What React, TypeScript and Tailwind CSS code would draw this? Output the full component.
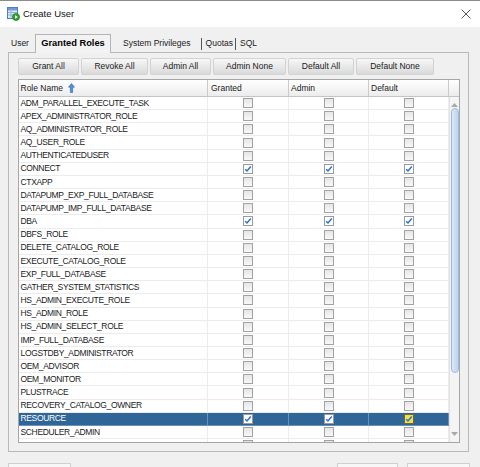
import React from "react";

type Role = { name: string; on?: boolean };

const roles: Role[] = [
  { name: "ADM_PARALLEL_EXECUTE_TASK" },
  { name: "APEX_ADMINISTRATOR_ROLE" },
  { name: "AQ_ADMINISTRATOR_ROLE" },
  { name: "AQ_USER_ROLE" },
  { name: "AUTHENTICATEDUSER" },
  { name: "CONNECT", on: true },
  { name: "CTXAPP" },
  { name: "DATAPUMP_EXP_FULL_DATABASE" },
  { name: "DATAPUMP_IMP_FULL_DATABASE" },
  { name: "DBA", on: true },
  { name: "DBFS_ROLE" },
  { name: "DELETE_CATALOG_ROLE" },
  { name: "EXECUTE_CATALOG_ROLE" },
  { name: "EXP_FULL_DATABASE" },
  { name: "GATHER_SYSTEM_STATISTICS" },
  { name: "HS_ADMIN_EXECUTE_ROLE" },
  { name: "HS_ADMIN_ROLE" },
  { name: "HS_ADMIN_SELECT_ROLE" },
  { name: "IMP_FULL_DATABASE" },
  { name: "LOGSTDBY_ADMINISTRATOR" },
  { name: "OEM_ADVISOR" },
  { name: "OEM_MONITOR" },
  { name: "PLUSTRACE" },
  { name: "RECOVERY_CATALOG_OWNER" },
  { name: "RESOURCE", on: true },
  { name: "SCHEDULER_ADMIN" },
  { name: "SELECT_CATALOG_ROLE" },
];

const SELECTED = "RESOURCE";

function Check({ checked, focus }: { checked?: boolean; focus?: boolean }) {
  const box = focus
    ? "border-[#6a6a3a] bg-[#f6e04a]"
    : checked
      ? "border-[#9a9a9a] bg-white"
      : "border-[#a2a2a2] bg-gradient-to-b from-[#e6e6e6] to-[#f8f8f8]";
  return (
    <div className={`w-[10px] h-[10px] border ${box} flex items-center justify-center`}>
      {checked && (
        <svg width="8" height="8" viewBox="0 0 8 8">
          <path d="M1.2 4.2 L3 6 L6.8 1.6" fill="none" stroke="#2f6ed3" strokeWidth="1.5" />
        </svg>
      )}
    </div>
  );
}

function ToolButton({ label, w }: { label: string; w: string }) {
  return (
    <div
      className={`${w} h-[17px] flex items-center justify-center rounded-[2px] border border-[#d2d2d2] bg-gradient-to-b from-[#f7f7f7] to-[#dadada] text-[8.5px] text-[#1a1a1a]`}
    >
      {label}
    </div>
  );
}

function TitleIcon() {
  return (
    <svg width="13" height="14" viewBox="0 0 13 14">
      <rect x="0.5" y="0.5" width="10" height="11" fill="#dfe9f6" stroke="#4f7fc0" />
      <rect x="1" y="1" width="9" height="2.5" fill="#6f9bd6" />
      <line x1="1" y1="5.5" x2="10" y2="5.5" stroke="#8fb0dc" />
      <line x1="1" y1="8" x2="10" y2="8" stroke="#8fb0dc" />
      <line x1="4" y1="3" x2="4" y2="11" stroke="#8fb0dc" />
      <circle cx="9" cy="10" r="3.6" fill="#2ea12e" stroke="#1d7a1d" strokeWidth="0.6" />
      <path d="M8 8.2 L10.8 10 L8 11.8 Z" fill="#ffffff" />
    </svg>
  );
}

function SortArrow() {
  return (
    <svg width="7" height="10" viewBox="0 0 7 10">
      <path d="M3.5 0.5 L6.5 4.2 L4.6 4.2 L4.6 9.5 L2.4 9.5 L2.4 4.2 L0.5 4.2 Z" fill="#4d90dd" stroke="#2a67b5" strokeWidth="0.6" />
    </svg>
  );
}

export default function App() {
  return (
    <div
      className="w-[480px] h-[467px] overflow-hidden bg-[#f0f0f0] border-t border-[#8c8c8c] text-black"
      style={{ fontFamily: '"Liberation Sans", Arial, sans-serif' }}
    >
      {/* title bar */}
      <div className="h-[26px] bg-white flex items-center pl-[7px] pr-[9px]">
        <TitleIcon />
        <span className="ml-[3px] text-[9.5px] text-[#111]">Create User</span>
        <svg className="ml-auto" width="10" height="10" viewBox="0 0 10 10">
          <path d="M0.5 0.5 L9.5 9.5 M9.5 0.5 L0.5 9.5" stroke="#444" strokeWidth="0.9" />
        </svg>
      </div>

      {/* tabs */}
      <div className="mt-[7px] h-[19px] flex items-stretch pl-[8px] text-[8.5px] text-[#1a1a1a]">
        <div className="w-[27px] flex items-center pl-[3px]">User</div>
        <div className="relative z-10 w-[76px] flex items-center justify-center border border-b-0 border-[#b4b4b4] bg-[#f3f3f3] font-bold text-[9.3px] text-black">
          Granted Roles
        </div>
        <div className="flex items-center ml-[12px]">System Privileges</div>
        <div className="flex items-center ml-[10px]">
          <div className="w-px h-[12px] bg-[#555]" />
        </div>
        <div className="flex items-center ml-[4px]">Quotas</div>
        <div className="flex items-center ml-[2px]">
          <div className="w-px h-[12px] bg-[#555]" />
        </div>
        <div className="flex items-center ml-[4px]">SQL</div>
      </div>

      {/* panel */}
      <div className="-mt-px ml-[8px] w-[461px] h-[400px] border border-[#b9b9b9] pt-[5px] pl-[9px]">
        <div className="flex gap-[2px]">
          <ToolButton label="Grant All" w="w-[61px]" />
          <ToolButton label="Revoke All" w="w-[67px]" />
          <ToolButton label="Admin All" w="w-[61px]" />
          <ToolButton label="Admin None" w="w-[73px]" />
          <ToolButton label="Default All" w="w-[66px]" />
          <ToolButton label="Default None" w="w-[78px]" />
        </div>

        {/* table */}
        <div className="mt-[4px] w-[442px] h-[364px] border border-[#a6a6a6] bg-white flex flex-col text-[8.5px]">
          <div className="h-[17px] flex border-b border-[#c4c4c4] bg-gradient-to-b from-white to-[#ececec] text-[#1a1a1a]">
            <div className="w-[189px] flex items-center pl-[1.5px] border-r border-[#cacaca]">
              Role Name
              <span className="ml-[5px] flex items-center">
                <SortArrow />
              </span>
            </div>
            <div className="w-[81px] flex items-center pl-[3px] border-r border-[#cacaca]">Granted</div>
            <div className="w-[80px] flex items-center pl-[2px] border-r border-[#cacaca]">Admin</div>
            <div className="w-[80px] flex items-center pl-[2px] border-r border-[#cacaca]">Default</div>
            <div className="flex-1" />
          </div>

          <div className="flex-1 flex overflow-hidden">
            <div className="w-[430px] overflow-hidden">
              {roles.map((r) => {
                const sel = r.name === SELECTED;
                const line = sel ? "border-[#6a8fb8]" : "border-[#ececec]";
                return (
                  <div
                    key={r.name}
                    className={`h-[13.16px] flex border-b ${line} ${sel ? "bg-[#2f6597] text-white" : "text-[#1a1a1a]"}`}
                  >
                    <div className={`w-[189px] flex items-center pl-[1.5px] tracking-[-0.35px] border-r ${line}`}>
                      {r.name}
                    </div>
                    <div className={`w-[81px] flex items-center justify-center border-r ${line}`}>
                      <Check checked={r.on} />
                    </div>
                    <div className={`w-[80px] flex items-center justify-center border-r ${line}`}>
                      <Check checked={r.on} />
                    </div>
                    <div className={`w-[80px] flex items-center justify-center border-r ${line}`}>
                      <Check checked={r.on} focus={sel} />
                    </div>
                  </div>
                );
              })}
            </div>

            {/* scrollbar */}
            <div className="flex-1 flex flex-col items-center bg-[#f4f4f4] border-l border-[#e2e2e2]">
              <div className="h-[10px] flex items-end justify-center">
                <svg width="7" height="4" viewBox="0 0 7 4">
                  <path d="M0 4 L3.5 0 L7 4 Z" fill="#a9a9a9" />
                </svg>
              </div>
              <div className="mt-[1px] w-[8px] h-[265px] rounded-full border border-[#9dbbe0] bg-gradient-to-r from-[#dce9f7] to-[#bcd4ee]" />
              <div className="flex-1" />
              <div className="h-[10px] flex items-start justify-center">
                <svg width="7" height="4" viewBox="0 0 7 4">
                  <path d="M0 0 L3.5 4 L7 0 Z" fill="#a9a9a9" />
                </svg>
              </div>
            </div>
          </div>
        </div>
      </div>

      {/* dialog buttons, only their top edge shows */}
      <div className="mt-[11px] flex">
        <div className="ml-[8px] w-[63px] h-[22px] border border-[#d0d0d0] bg-[#f7f7f7]" />
        <div className="ml-[266px] w-[61px] h-[22px] border border-[#d0d0d0] bg-[#f7f7f7]" />
        <div className="ml-[9px] w-[63px] h-[22px] border border-[#d0d0d0] bg-[#f7f7f7]" />
      </div>
    </div>
  );
}
